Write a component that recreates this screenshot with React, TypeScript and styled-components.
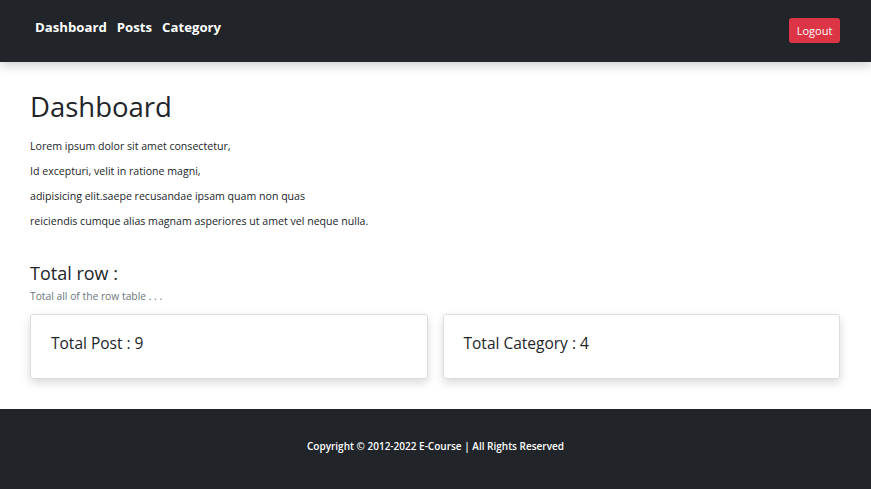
import React from 'react'
import styled, { createGlobalStyle } from 'styled-components'

const GlobalStyle = createGlobalStyle`
  html, body {
    margin: 0;
    padding: 0;
    background: #ffffff;
  }
  body {
    font-family: "Open Sans", "DejaVu Sans", sans-serif;
    color: #212529;
  }
  * {
    box-sizing: border-box;
  }
`

const Page = styled.div`
  display: flex;
  flex-direction: column;
  min-height: 489px;
`

const Navbar = styled.nav`
  height: 62px;
  background: #212529;
  display: flex;
  align-items: center;
  justify-content: space-between;
  padding: 0 31px 0 35px;
  box-shadow: 0 4px 10px rgba(0, 0, 0, 0.18);
  position: relative;
  z-index: 2;
`

const NavLinks = styled.div`
  display: flex;
  gap: 10px;
  margin-bottom: 8px;
`

const NavLink = styled.a`
  color: #ffffff;
  font-weight: 700;
  font-size: 13.2px;
  text-decoration: none;
`

const LogoutButton = styled.button`
  background: #dc3545;
  color: #ffffff;
  border: none;
  border-radius: 3px;
  font-family: inherit;
  font-size: 11px;
  width: 51px;
  height: 25px;
  padding: 0;
  margin-bottom: 1px;
`

const Main = styled.main`
  flex: 1;
  padding: 28px 31px 30px 30px;
`

const Title = styled.h1`
  margin: 0 0 10px;
  font-weight: 400;
  font-size: 27.5px;
  line-height: 34px;
`

const Para = styled.p`
  margin: 0;
  font-size: 10.6px;
  line-height: 25px;
`

const SectionTitle = styled.h2`
  margin: 27px 0 0;
  font-weight: 400;
  font-size: 18px;
  line-height: 24px;
`

const Subtitle = styled.small`
  display: block;
  font-size: 10.3px;
  color: #6c757d;
  line-height: 14px;
  margin-top: 4px;
`

const CardGrid = styled.div`
  display: grid;
  grid-template-columns: 1fr 1fr;
  gap: 15px;
  margin-top: 11px;
`

const Card = styled.div`
  height: 65px;
  border: 1px solid #dcdcdc;
  border-radius: 3px;
  box-shadow: 0 4px 10px rgba(0, 0, 0, 0.15);
  display: flex;
  align-items: center;
  padding: 0 20px 7px;
  font-size: 15.5px;
`

const Footer = styled.footer`
  height: 80px;
  background: #212529;
  color: #ffffff;
  display: flex;
  align-items: center;
  justify-content: center;
  padding-bottom: 6px;
  font-size: 10px;
  font-weight: 600;
`

const lines = [
  'Lorem ipsum dolor sit amet consectetur,',
  'Id excepturi, velit in ratione magni,',
  'adipisicing elit.saepe recusandae ipsam quam non quas',
  'reiciendis cumque alias magnam asperiores ut amet vel neque nulla.'
]

export default function App() {
  return (
    <Page>
      <GlobalStyle />
      <Navbar>
        <NavLinks>
          <NavLink href='#'>Dashboard</NavLink>
          <NavLink href='#'>Posts</NavLink>
          <NavLink href='#'>Category</NavLink>
        </NavLinks>
        <LogoutButton>Logout</LogoutButton>
      </Navbar>
      <Main>
        <Title>Dashboard</Title>
        {lines.map(line => (
          <Para key={line}>{line}</Para>
        ))}
        <SectionTitle>Total row :</SectionTitle>
        <Subtitle>Total all of the row table . . .</Subtitle>
        <CardGrid>
          <Card>Total Post : 9</Card>
          <Card>Total Category : 4</Card>
        </CardGrid>
      </Main>
      <Footer>Copyright © 2012-2022 E-Course | All Rights Reserved</Footer>
    </Page>
  )
}
